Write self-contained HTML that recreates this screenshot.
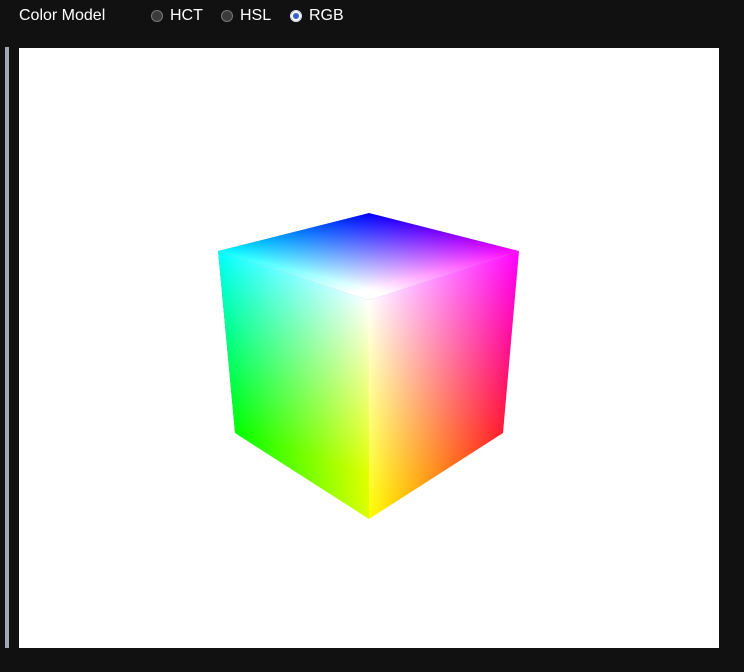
<!DOCTYPE html>
<html><head><style>
html,body{margin:0;padding:0;width:744px;height:672px;background:#111;overflow:hidden;font-family:"Liberation Sans",Arial,sans-serif;color:#fff}
.t{position:absolute;font-size:16px;top:7px;line-height:18px}
.r{position:absolute;top:10px;width:10px;height:10px;border-radius:50%;background:#3b3b3b;border:1px solid #777}
.sel{background:#3b5bd6;border:1px solid #dfe6ff;box-shadow:inset 0 0 0 2px #fff}
.bar{position:absolute;left:5px;top:47px;width:4px;height:601px;background:#a3a7b3}
.canvas{position:absolute;left:19px;top:48px;width:700px;height:600px;background:#fff}
.clip{position:absolute;left:0;top:0;width:744px;height:672px}
.f{position:absolute;left:0;top:0;transform-origin:0 0;background-repeat:no-repeat}
</style></head><body>
<div class="t" style="left:19px">Color Model</div>
<div class="r" style="left:151px"></div><div class="t" style="left:170px">HCT</div>
<div class="r" style="left:221px"></div><div class="t" style="left:240px">HSL</div>
<div class="r sel" style="left:290px"></div><div class="t" style="left:309px">RGB</div>
<div class="bar"></div>
<div class="canvas"></div>
<div class="clip" style="clip-path:polygon(218px 251px,369px 300px,369px 519px,235px 433px)">
<div class="f" style="width:100px;height:140px;transform:matrix(1.51,0.49,0.17,1.82,218,251);background:linear-gradient(to right,#000,#f00),linear-gradient(to bottom,#00f 0,#000 100px,#000 140px),#0f0;background-blend-mode:screen"></div></div>
<div class="clip" style="clip-path:polygon(369px 300px,519px 251px,503px 433px,369px 519px)">
<div class="f" style="width:100px;height:100px;transform:matrix(1.5,-0.49,0,2.19,369,300);background:linear-gradient(to right,#0f0,#000),linear-gradient(to bottom,#00f,#000),#f00;background-blend-mode:screen"></div></div>
<div class="clip" style="clip-path:polygon(369px 213px,519px 251px,369px 300px,218px 251px)">
<div class="f" style="width:115px;height:115px;transform:matrix(1.5,0.38,-1.51,0.38,369,213);background:linear-gradient(to right,#000 0,#f00 100px,#f00 115px),linear-gradient(to bottom,#000 0,#0f0 100px,#0f0 115px),#00f;background-blend-mode:screen"></div></div>
</body></html>
